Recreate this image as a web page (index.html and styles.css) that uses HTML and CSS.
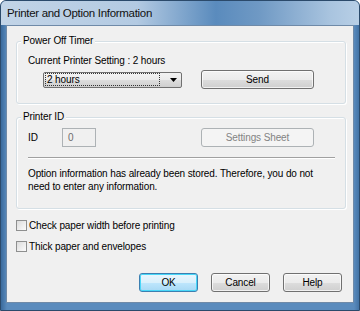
FILE: index.html
```
<!DOCTYPE html>
<html>
<head>
<meta charset="utf-8">
<link rel="stylesheet" href="styles.css">
</head>
<body>
<div class="window">
  <div class="titlebar"><span class="title">Printer and Option Information</span></div>
  <div class="client">
    <div class="group group-timer">
      <span class="legend">Power Off Timer</span>
      <div class="line">Current Printer Setting : 2 hours</div>
      <div class="row row-timer">
        <div class="combo">
          <span class="combo-text">2 hours</span>
          <svg class="combo-arrow" width="7" height="4" viewBox="0 0 7 4"><path d="M0 0H7L3.5 4Z" fill="#000"/></svg>
        </div>
        <button class="btn btn-wide">Send</button>
      </div>
    </div>
    <div class="group group-id">
      <span class="legend">Printer ID</span>
      <div class="row row-id">
        <span class="id-label">ID</span>
        <div class="id-input">0</div>
        <button class="btn btn-wide btn-disabled">Settings Sheet</button>
      </div>
      <div class="separator"></div>
      <p class="note">Option information has already been stored. Therefore, you do not need to enter any information.</p>
    </div>
    <label class="check check-first"><span class="box"></span>Check paper width before printing</label>
    <label class="check"><span class="box"></span>Thick paper and envelopes</label>
    <div class="actions">
      <button class="btn btn-default">OK</button>
      <button class="btn">Cancel</button>
      <button class="btn">Help</button>
    </div>
  </div>
</div>
</body>
</html>
```
FILE: styles.css
```
html, body {
  margin: 0;
  padding: 0;
  background: #ffffff;
}
.window {
  width: 360px;
  height: 311px;
  box-sizing: border-box;
  border: 1px solid #2b4a6b;
  border-radius: 6px 6px 0 0;
  background: linear-gradient(to right, #3a6a9c 0px, #5a8bbd 6px, #5a8bbd 353px, #3a6a9c 360px);
  display: flex;
  flex-direction: column;
  overflow: hidden;
  font-family: "Liberation Sans", Arial, sans-serif;
  font-size: 10px;
  letter-spacing: -0.12px;
  color: #000;
}
.titlebar {
  height: 24px;
  flex: none;
  display: flex;
  align-items: center;
  padding-left: 6px;
  background: linear-gradient(to right, #c2d4e7 0%, #b3cae2 38%, #5a8bbd 60%, #6f99c4 72%, #a9c4df 92%, #b8cfe6 100%);
}
.title {
  font-family: "Liberation Sans", Arial, sans-serif;
  font-size: 11.5px;
  letter-spacing: -0.3px;
  color: #111;
}
.client {
  margin: 0 5px;
  height: 278px;
  box-sizing: border-box;
  background: #f0f0f0;
  border: 1px solid #6f8aa8;
  padding: 0 7px 0 9px;
  display: flex;
  flex-direction: column;
}
.group {
  position: relative;
  border: 1px solid #d5dfe5;
  border-radius: 3px;
  box-shadow: inset 1px 1px 0 #fff, 1px 1px 0 #fff;
  padding-left: 11px;
}
.legend {
  position: absolute;
  top: -7px;
  left: 4px;
  padding: 0 2px;
  background: #f0f0f0;
  line-height: 12px;
}
.group-timer {
  margin-top: 15px;
  height: 63px;
  box-sizing: border-box;
  padding-top: 12px;
}
.line {
  line-height: 13px;
}
.row {
  display: flex;
  align-items: center;
}
.row-timer {
  margin-top: 3px;
  height: 19px;
}
.combo {
  margin-left: 15px;
  width: 139px;
  height: 16px;
  box-sizing: border-box;
  border: 1px solid #707070;
  border-radius: 2px;
  background: linear-gradient(#f2f2f2 0%, #ebebeb 50%, #dddddd 51%, #cfcfcf 100%);
  display: flex;
  align-items: center;
  padding: 0 4px 0 1px;
}
.combo-text {
  flex: 1;
  border: 1px dotted #333;
  line-height: 11px;
  padding-left: 1px;
  margin-right: 10px;
}
.combo-arrow {
  flex: none;
}
.btn {
  font-family: inherit;
  font-size: 10px;
  letter-spacing: -0.12px;
  color: #000;
  height: 19px;
  width: 59px;
  padding: 0;
  box-sizing: border-box;
  border: 1px solid #707070;
  border-radius: 3px;
  background: linear-gradient(#f2f2f2 0%, #ebebeb 50%, #dddddd 51%, #cfcfcf 100%);
  box-shadow: inset 0 0 0 1px rgba(255,255,255,0.7);
}
.btn-wide {
  width: 113px;
  margin-left: 19px;
}
.btn-disabled {
  color: #838383;
  border-color: #adb2b5;
  background: #f4f4f4;
  box-shadow: none;
}
.btn-default {
  border-color: #3c7fb1;
  background: linear-gradient(#eaf6fd 0%, #d9f0fc 50%, #bee6fd 51%, #a7d9f5 100%);
  box-shadow: inset 0 0 0 1px #48d7f8;
}
.group-id {
  margin-top: 13px;
  height: 92px;
  box-sizing: border-box;
  padding-top: 10px;
}
.row-id {
  height: 19px;
}
.id-label {
  width: 34px;
}
.id-input {
  width: 34px;
  height: 19px;
  box-sizing: border-box;
  border: 1px solid #adb2b5;
  background: #f0f0f0;
  color: #6d6d6d;
  padding-left: 5px;
  line-height: 17px;
}
.row-id .btn-wide {
  margin-left: 105px;
}
.separator {
  margin-top: 10px;
  width: 307px;
  height: 1px;
  background: #a0a0a0;
  border-bottom: 1px solid #fff;
}
.note {
  margin: 8px 0 0;
  line-height: 13px;
  width: 300px;
}
.check {
  display: flex;
  align-items: center;
  height: 13px;
  margin-top: 8px;
  line-height: 13px;
}
.check-first {
  margin-top: 10px;
}
.box {
  width: 11px;
  height: 11px;
  box-sizing: border-box;
  border: 1px solid #8e8f8f;
  background: linear-gradient(135deg, #dcdcdc, #fbfbfb);
  margin-right: 2px;
  flex: none;
}
.actions {
  margin-top: 20px;
  display: flex;
  justify-content: flex-end;
  gap: 13px;
  padding-right: 4px;
}
```
